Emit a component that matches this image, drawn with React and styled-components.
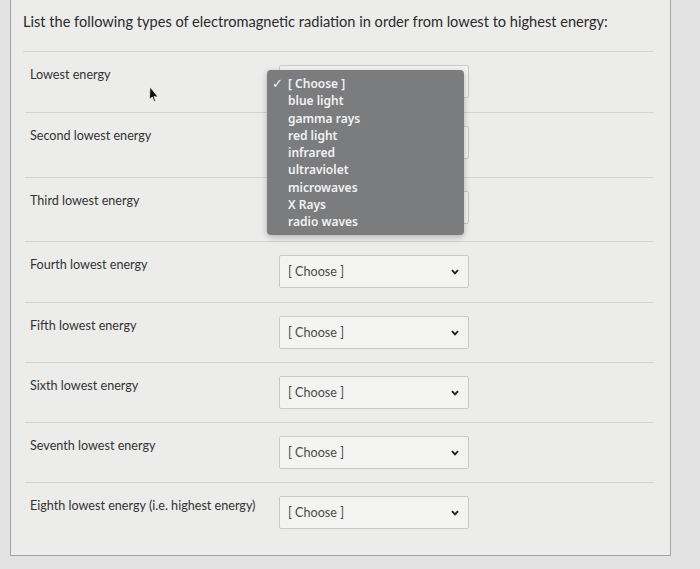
import React from 'react';
import styled, { createGlobalStyle } from 'styled-components';

const GlobalStyle = createGlobalStyle`
  html, body {
    margin: 0;
    padding: 0;
    background: #e3e3e3;
    font-family: Lato, "Liberation Sans", sans-serif;
  }
`;

const Page = styled.div`
  width: 700px;
  height: 569px;
  overflow: hidden;
  position: relative;
`;

const Card = styled.div`
  position: relative;
  margin-left: 10px;
  width: 661px;
  height: 556px;
  background: #ececeb;
  border: 1px solid #a3a3a3;
  border-top: none;
  box-sizing: border-box;
  padding: 0 16px 0 14px;
`;

const Title = styled.div`
  padding: 13px 0 0 0;
  margin-left: -2px;
  height: 52px;
  box-sizing: border-box;
  font-size: 14.6px;
  color: #2b2b2b;
  border-bottom: 1px solid #d3d3d3;
`;

const Row = styled.div`
  display: grid;
  grid-template-columns: 249px 190px;
  align-items: start;
  height: ${({ $h }) => $h}px;
  box-sizing: border-box;
  border-bottom: ${({ $last }) => ($last ? 'none' : '1px solid #d3d3d3')};
  padding-left: 5px;
`;

const Label = styled.div`
  padding-top: 15px;
  font-size: 12.6px;
  color: #333;
`;

const Select = styled.div`
  margin-top: 13px;
  height: 33px;
  box-sizing: border-box;
  border: 1px solid #c9c9c9;
  border-radius: 2px;
  background: #f3f3f2;
  display: flex;
  align-items: center;
  justify-content: space-between;
  padding: 0 9px 0 8px;
  font-size: 12.6px;
  color: #4a4a4a;
`;

const Chevron = styled.svg`
  width: 8px;
  height: 6px;
`;

const Menu = styled.div`
  position: absolute;
  left: 256px;
  top: 70px;
  width: 197px;
  height: 165px;
  background: #7b7c7e;
  border-radius: 4px;
  box-shadow: 0 2px 6px rgba(0, 0, 0, 0.25);
  padding-top: 5px;
  box-sizing: border-box;
  font-family: "Noto Sans", "DejaVu Sans", sans-serif;
  font-size: 12px;
  font-weight: 600;
  color: #f2f2f2;
`;

const Item = styled.div`
  position: relative;
  height: 17.3px;
  line-height: 17.3px;
  padding-left: 21px;
`;

const Check = styled.span`
  position: absolute;
  left: 5px;
  font-size: 13px;
`;

const Cursor = styled.svg`
  position: absolute;
  left: 147px;
  top: 86px;
  width: 12px;
  height: 16px;
`;

const rows = [
  { label: 'Lowest energy', h: 61, covered: true },
  { label: 'Second lowest energy', h: 65, covered: true },
  { label: 'Third lowest energy', h: 64, covered: true },
  { label: 'Fourth lowest energy', h: 61 },
  { label: 'Fifth lowest energy', h: 60 },
  { label: 'Sixth lowest energy', h: 60 },
  { label: 'Seventh lowest energy', h: 60 },
  { label: 'Eighth lowest energy (i.e. highest energy)', h: 70 },
];

const options = [
  'blue light',
  'gamma rays',
  'red light',
  'infrared',
  'ultraviolet',
  'microwaves',
  'X Rays',
  'radio waves',
];

export default function App() {
  return (
    <Page>
      <GlobalStyle />
      <Card>
        <Title>List the following types of electromagnetic radiation in order from lowest to highest energy:</Title>
        {rows.map((r, i) => (
          <Row key={r.label} $h={r.h} $last={i === rows.length - 1}>
            <Label>{r.label}</Label>
            <Select>
              <span>{r.covered ? '' : '[ Choose ]'}</span>
              <Chevron viewBox="0 0 8 6">
                <path d="M1 1.2 L4 4.4 L7 1.2" fill="none" stroke="#222" strokeWidth="1.9" />
              </Chevron>
            </Select>
          </Row>
        ))}
        <Menu>
          <Item>
            <Check>✓</Check>[ Choose ]
          </Item>
          {options.map((o) => (
            <Item key={o}>{o}</Item>
          ))}
        </Menu>
      </Card>
      <Cursor viewBox="0 0 12 16">
        <path d="M3 1 L11 11 L7 10.5 L8.5 15 L7 15.5 L5.5 11 L2.5 13 Z" fill="#111" stroke="#fff" strokeWidth="0.6" />
      </Cursor>
    </Page>
  );
}
